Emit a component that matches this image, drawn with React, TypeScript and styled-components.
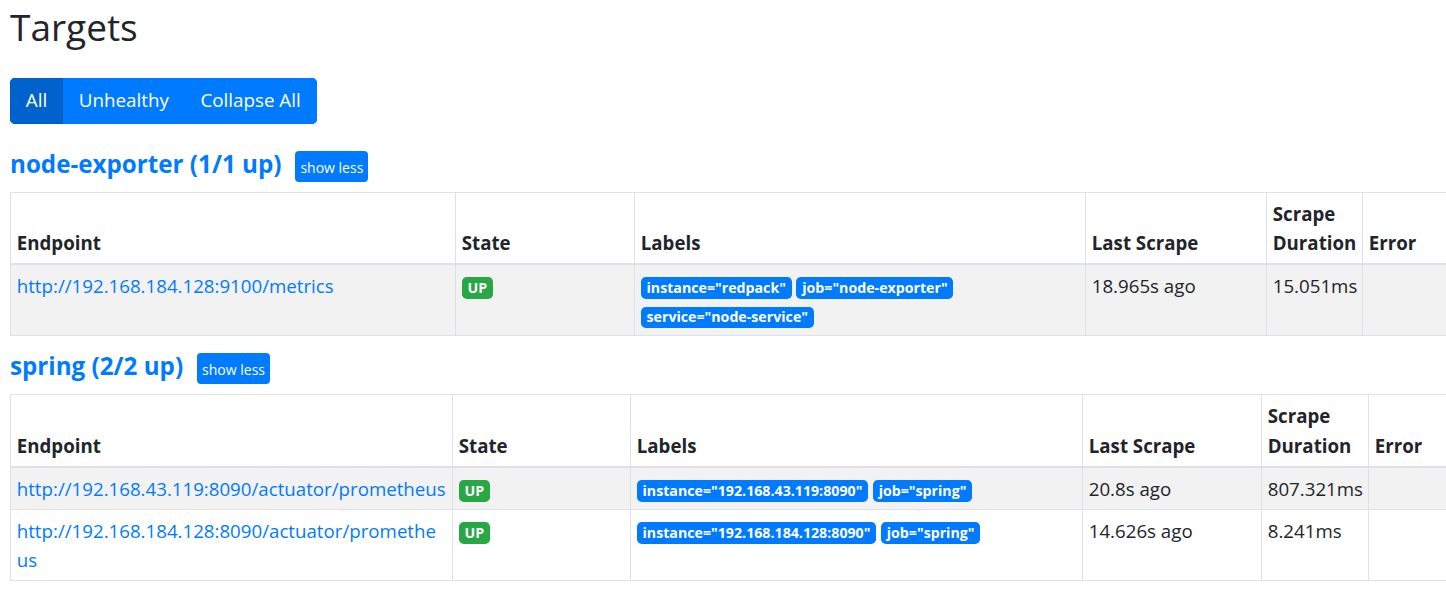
import React from 'react';
import styled, { createGlobalStyle } from 'styled-components';

const GlobalStyle = createGlobalStyle`
  html, body {
    margin: 0;
    padding: 0;
    background: #ffffff;
    overflow: hidden;
  }
  body {
    font-family: "Open Sans", "Noto Sans", sans-serif;
    font-size: 19.2px;
    color: #212529;
  }
  * { box-sizing: border-box; }
`;

const Page = styled.div`
  padding: 0 10px;
`;

const Title = styled.h2`
  font-size: 37px;
  font-weight: 400;
  line-height: 45.6px;
  margin: 4px 0 28px;
`;

const Toolbar = styled.div`
  display: flex;
  margin-bottom: 26px;
`;

const ButtonGroup = styled.div`
  display: inline-flex;
  border-radius: 4.8px;
  overflow: hidden;
`;

const GroupButton = styled.button<{ $active?: boolean }>`
  font-family: inherit;
  font-size: 18.8px;
  line-height: 28.8px;
  height: 46px;
  padding: 0 14.8px;
  color: #ffffff;
  background: ${(p) => (p.$active ? '#0062cc' : '#007bff')};
  border: 1px solid ${(p) => (p.$active ? '#005cbf' : '#007bff')};
  cursor: pointer;
`;

const PoolHeader = styled.div`
  display: flex;
  align-items: baseline;
  gap: 14px;
  margin-bottom: 10px;
`;

const PoolTitle = styled.a`
  font-size: 24.2px;
  font-weight: 700;
  line-height: 28.8px;
  color: #007bff;
  text-decoration: none;
`;

const SmallButton = styled.button`
  font-family: inherit;
  font-size: 14px;
  line-height: 21px;
  padding: 6px 5px 4px;
  color: #ffffff;
  background: #007bff;
  border: 0;
  border-radius: 4px;
  cursor: pointer;
`;

const Table = styled.table<{ $width: number }>`
  border-collapse: collapse;
  table-layout: fixed;
  width: ${(p) => p.$width}px;
  font-size: 18.7px;
  line-height: 29.2px;
  margin-bottom: 16px;
`;

const HeadCell = styled.th`
  border: 1px solid #dee2e6;
  border-bottom-width: 2px;
  padding: 6px 5.76px;
  text-align: left;
  vertical-align: bottom;
  font-weight: 700;
`;

const BodyRow = styled.tr<{ $striped: boolean }>`
  background: ${(p) => (p.$striped ? '#f2f2f2' : 'transparent')};
`;

const Cell = styled.td`
  border: 1px solid #dee2e6;
  padding: 6px 5.76px;
  vertical-align: top;
`;

const EndpointLink = styled.a`
  color: #007bff;
  text-decoration: none;
  word-break: break-all;
`;

const Badge = styled.span<{ $variant: 'primary' | 'success' }>`
  display: inline-block;
  font-size: 14.2px;
  font-weight: 700;
  line-height: 1;
  padding: 3.6px 5.76px;
  border-radius: 4.8px;
  color: #ffffff;
  background: ${(p) => (p.$variant === 'success' ? '#28a745' : '#007bff')};
  margin-right: 4.8px;
  white-space: nowrap;
  vertical-align: baseline;
`;

type Target = {
  endpoint: string;
  labels: [string, string][];
  last: string;
  duration: string;
};

type Pool = {
  name: string;
  up: string;
  cols: number[];
  targets: Target[];
};

const pools: Pool[] = [
  {
    name: 'node-exporter',
    up: '1/1',
    cols: [445, 179, 451, 181, 96, 130],
    targets: [
      {
        endpoint: 'http://192.168.184.128:9100/metrics',
        labels: [
          ['instance', 'redpack'],
          ['job', 'node-exporter'],
          ['service', 'node-service'],
        ],
        last: '18.965s ago',
        duration: '15.051ms',
      },
    ],
  },
  {
    name: 'spring',
    up: '2/2',
    cols: [442, 178, 452, 179, 107, 124],
    targets: [
      {
        endpoint: 'http://192.168.43.119:8090/actuator/prometheus',
        labels: [
          ['instance', '192.168.43.119:8090'],
          ['job', 'spring'],
        ],
        last: '20.8s ago',
        duration: '807.321ms',
      },
      {
        endpoint: 'http://192.168.184.128:8090/actuator/prometheus',
        labels: [
          ['instance', '192.168.184.128:8090'],
          ['job', 'spring'],
        ],
        last: '14.626s ago',
        duration: '8.241ms',
      },
    ],
  },
];

const headers = ['Endpoint', 'State', 'Labels', 'Last Scrape', 'Scrape Duration', 'Error'];

const PoolPanel: React.FC<{ pool: Pool }> = ({ pool }) => (
  <section>
    <PoolHeader>
      <PoolTitle href="#">
        {pool.name} ({pool.up} up)
      </PoolTitle>
      <SmallButton>show less</SmallButton>
    </PoolHeader>
    <Table $width={pool.cols.reduce((a, b) => a + b, 0)}>
      <colgroup>
        {pool.cols.map((w, i) => (
          <col key={i} style={{ width: w }} />
        ))}
      </colgroup>
      <thead>
        <tr>
          {headers.map((h) => (
            <HeadCell key={h}>{h}</HeadCell>
          ))}
        </tr>
      </thead>
      <tbody>
        {pool.targets.map((t, i) => (
          <BodyRow key={t.endpoint} $striped={i % 2 === 0}>
            <Cell>
              <EndpointLink href="#">{t.endpoint}</EndpointLink>
            </Cell>
            <Cell>
              <Badge $variant="success">UP</Badge>
            </Cell>
            <Cell>
              {t.labels.map(([k, v]) => (
                <Badge key={k} $variant="primary">
                  {k}="{v}"
                </Badge>
              ))}
            </Cell>
            <Cell>{t.last}</Cell>
            <Cell>{t.duration}</Cell>
            <Cell></Cell>
          </BodyRow>
        ))}
      </tbody>
    </Table>
  </section>
);

export default function App() {
  return (
    <Page>
      <GlobalStyle />
      <Title>Targets</Title>
      <Toolbar>
        <ButtonGroup>
          <GroupButton $active>All</GroupButton>
          <GroupButton>Unhealthy</GroupButton>
          <GroupButton>Collapse All</GroupButton>
        </ButtonGroup>
      </Toolbar>
      {pools.map((p) => (
        <PoolPanel key={p.name} pool={p} />
      ))}
    </Page>
  );
}
